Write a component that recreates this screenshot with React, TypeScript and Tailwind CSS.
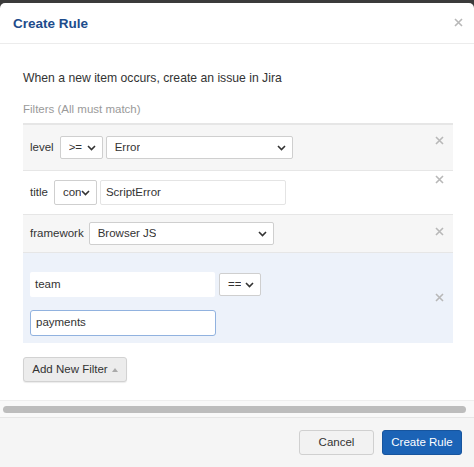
import React from "react";

const Chevron = () => (
  <svg width="9" height="6" viewBox="0 0 9 6" className="shrink-0">
    <polyline points="1,1 4.5,4.5 8,1" fill="none" stroke="#333" strokeWidth="1.6" />
  </svg>
);

const Close = ({ className = "" }: { className?: string }) => (
  <svg width="9" height="9" viewBox="0 0 9 9" className={className}>
    <path d="M1 1L8 8M8 1L1 8" stroke="#b8b8b8" strokeWidth="1.6" />
  </svg>
);

const Select = ({ value, className = "" }: { value: string; className?: string }) => (
  <div
    className={`flex items-center justify-between bg-white border border-[#cfcfcf] rounded-[2px] pl-[8px] pr-[6px] text-[11.5px] text-[#333] ${className}`}
  >
    <span className="overflow-hidden whitespace-nowrap">{value}</span>
    <Chevron />
  </div>
);

const Input = ({ value, className = "" }: { value: string; className?: string }) => (
  <div className={`flex items-center bg-white rounded-[2px] px-[5px] text-[11.5px] text-[#333] ${className}`}>
    {value}
  </div>
);

export default function App() {
  return (
    <div
      className="w-[474px] h-[467px] bg-[#3b3b3b] pt-[3px] overflow-hidden"
      style={{ fontFamily: '"Liberation Sans", Arial, sans-serif' }}
    >
      <div className="bg-white rounded-t-[5px] h-full flex flex-col">
        <div className="h-[41px] shrink-0 flex items-center justify-between pl-[13px] pr-[11px] border-b border-[#ececec]">
          <h1 className="text-[13.5px] font-bold text-[#1d4c8c] mt-[2px]">Create Rule</h1>
          <Close className="mt-[-1px]" />
        </div>

        <div className="flex-1 px-[23px] pt-[25px]">
          <p className="text-[12.2px] text-[#333] leading-[18px]">
            When a new item occurs, create an issue in Jira
          </p>
          <p className="text-[11.5px] text-[#9a9a9a] leading-[16px] mt-[14px]">Filters (All must match)</p>

          <div className="mt-[6px] w-[430px] border-t-[2px] border-[#e6e6e6]">
            <div className="h-[46px] bg-[#f6f6f6] flex items-center pl-[7px] pr-[9px] border-b border-[#e6e6e6]">
              <span className="text-[11.5px] text-[#333] mr-[6px]">level</span>
              <Select value=">=" className="w-[43px] h-[23px]" />
              <Select value="Error" className="w-[187px] h-[23px] ml-[3px]" />
              <Close className="ml-auto mt-[-14px]" />
            </div>

            <div className="h-[44px] bg-white flex items-center pl-[7px] pr-[9px] border-b border-[#e6e6e6]">
              <span className="text-[11.5px] text-[#333] mr-[6px]">title</span>
              <Select value="con" className="w-[43px] h-[25px] pl-[6px]" />
              <Input value="ScriptError" className="w-[186px] h-[25px] ml-[3px] border border-[#e4e4e4]" />
              <Close className="ml-auto mt-[-27px]" />
            </div>

            <div className="h-[38px] bg-[#f6f6f6] flex items-center pl-[7px] pr-[9px] border-b border-[#e6e6e6]">
              <span className="text-[11.5px] text-[#333] mr-[5px]">framework</span>
              <Select value="Browser JS" className="w-[185px] h-[23px]" />
              <Close className="ml-auto mt-[-4px]" />
            </div>

            <div className="h-[90px] bg-[#edf2fa] flex items-center pl-[7px] pr-[9px]">
              <div className="flex flex-col gap-[13px] self-start pt-[19px]">
                <div className="flex items-center">
                  <Input value="team" className="w-[185px] h-[25px]" />
                  <Select value="==" className="w-[42px] h-[23px] ml-[4px]" />
                </div>
                <Input value="payments" className="w-[186px] h-[26px] border border-[#91b2df] rounded-[3px]" />
              </div>
              <Close className="ml-auto mt-[-2px]" />
            </div>
          </div>

          <button className="mt-[14px] h-[25px] w-[104px] flex items-center justify-center gap-[4px] bg-[#ececec] border border-[#d2d2d2] rounded-[3px] shadow-[0_1px_1px_rgba(0,0,0,0.08)] text-[11.5px] text-[#333]">
            Add New Filter
            <svg width="6" height="4" viewBox="0 0 6 4">
              <path d="M0 4L3 0L6 4Z" fill="#aaa" />
            </svg>
          </button>
        </div>

        <div className="h-[17px] shrink-0 bg-[#f9f9f9] border-t border-[#eeeeee] flex items-start pt-[5px] px-[3px]">
          <div className="h-[7px] w-[463px] rounded-full bg-[#bdbdbd]" />
        </div>

        <div className="h-[50px] shrink-0 bg-[#f5f5f5] border-t border-[#e6e6e6] flex items-center justify-end gap-[8px] pr-[12px]">
          <button className="w-[75px] h-[25px] bg-[#f2f2f2] border border-[#d0d0d0] rounded-[3px] text-[11.5px] text-[#333]">
            Cancel
          </button>
          <button className="w-[80px] h-[25px] bg-[#1b63b6] border border-[#17559e] rounded-[3px] text-[11.5px] text-white">
            Create Rule
          </button>
        </div>
      </div>
    </div>
  );
}
